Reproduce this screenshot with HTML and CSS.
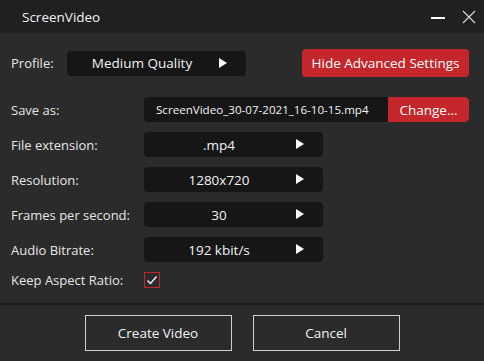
FILE: index.html
```html
<!DOCTYPE html>
<html lang="en">
<head>
    <meta charset="UTF-8">
    <title>ScreenVideo</title>
    <link rel="stylesheet" href="styles.css">
</head>
<body>

<div class="window">
    <!-- Title bar -->
    <div class="titlebar">
        <span class="title">ScreenVideo</span>
        <div class="winControls">
            <svg class="winBtn" width="14" height="14" viewBox="0 0 14 14"><rect x="0" y="7" width="14" height="2" fill="#ffffff"/></svg>
            <svg class="winBtn" width="14" height="14" viewBox="0 0 14 14"><path d="M1 1 L13 13 M13 1 L1 13" stroke="#d8d8d8" stroke-width="1.2" fill="none"/></svg>
        </div>
    </div>

    <div class="content">
        <!-- Profile row -->
        <div class="profileRow">
            <span class="label">Profile:</span>
            <div class="dropdown profileDrop">
                <span class="dropText">Medium Quality</span>
                <span class="arrow"></span>
            </div>
            <button class="redBtn advBtn">Hide Advanced Settings</button>
        </div>

        <!-- Advanced settings -->
        <div class="settings">
            <span class="label">Save as:</span>
            <div class="saveField">
                <span class="fileName">ScreenVideo_30-07-2021_16-10-15.mp4</span>
                <button class="redBtn changeBtn">Change...</button>
            </div>

            <span class="label">File extension:</span>
            <div class="dropdown"><span class="dropText">.mp4</span><span class="arrow"></span></div>

            <span class="label">Resolution:</span>
            <div class="dropdown"><span class="dropText">1280x720</span><span class="arrow"></span></div>

            <span class="label">Frames per second:</span>
            <div class="dropdown"><span class="dropText">30</span><span class="arrow"></span></div>

            <span class="label">Audio Bitrate:</span>
            <div class="dropdown"><span class="dropText">192 kbit/s</span><span class="arrow"></span></div>

            <span class="label">Keep Aspect Ratio:</span>
            <div class="checkbox">
                <svg width="14" height="14" viewBox="0 0 14 14"><path d="M2.5 7.5 L5.5 10.5 L11.5 3.5" stroke="#ffffff" stroke-width="1.3" fill="none"/></svg>
            </div>
        </div>
    </div>

    <!-- Footer buttons -->
    <div class="footer">
        <button class="outlineBtn">Create Video</button>
        <button class="outlineBtn">Cancel</button>
    </div>
</div>

</body>
</html>
```

FILE: styles.css
```css
/* Page */
body {
    margin: 0;
    background: #2b2b2b;
    font-family: "Open Sans", "Noto Sans", sans-serif;
    color: #ececec;
}

.window {
    width: 484px;
    height: 361px;
    display: flex;
    flex-direction: column;
    background: #2b2b2b;
}

/* Title bar */
.titlebar {
    height: 33px;
    background: #202020;
    display: flex;
    align-items: center;
    justify-content: space-between;
    padding: 0 8px 0 22px;
}

.title {
    font-size: 13.5px;
    color: #f2f2f2;
}

.winControls {
    display: flex;
    gap: 17px;
    align-items: center;
}

.winBtn {
    display: block;
}

/* Content */
.content {
    flex: 1;
    padding: 16px 15px 0 11px;
}

.label {
    font-size: 13px;
    color: #e6e6e6;
    display: flex;
    align-items: center;
}

.profileRow {
    display: flex;
    align-items: center;
    height: 28px;
}

.profileRow .label {
    width: 56px;
}

.dropdown {
    position: relative;
    width: 179px;
    height: 25px;
    background: #161616;
    border-radius: 4px;
    display: flex;
    align-items: center;
    box-sizing: border-box;
    padding-right: 29px;
}

.dropText {
    flex: 1;
    text-align: center;
    font-size: 13.5px;
    color: #f2f2f2;
}

/* Play-style arrow */
.arrow {
    position: absolute;
    right: 19px;
    top: 7px;
    width: 0;
    height: 0;
    border-top: 5px solid transparent;
    border-bottom: 5px solid transparent;
    border-left: 8px solid #ffffff;
}

.redBtn {
    background: #c4262b;
    color: #ffffff;
    border: none;
    font-family: inherit;
    font-size: 13.5px;
    cursor: pointer;
}

.advBtn {
    margin-left: auto;
    width: 167px;
    height: 28px;
    border-radius: 4px;
    padding: 0;
}

/* Settings grid */
.settings {
    display: grid;
    grid-template-columns: 133px auto;
    grid-template-rows: repeat(5, 25px) 16px;
    row-gap: 10px;
    margin-top: 20px;
    justify-items: start;
}

.saveField {
    display: flex;
    width: 325px;
    height: 25px;
    background: #161616;
    border-radius: 4px;
    overflow: hidden;
}

.fileName {
    flex: 1;
    padding-left: 12px;
    font-size: 11.6px;
    color: #f2f2f2;
    display: flex;
    align-items: center;
}

.changeBtn {
    width: 81px;
    height: 25px;
    border-radius: 0 4px 4px 0;
    padding: 0;
}

.checkbox {
    width: 16px;
    height: 16px;
    box-sizing: border-box;
    border: 1px solid #c4262b;
    display: flex;
    align-items: center;
    justify-content: center;
}

/* Footer */
.footer {
    border-top: 2px solid #1e1e1e;
    height: 56px;
    display: flex;
    justify-content: center;
    align-items: center;
    gap: 21px;
}

.outlineBtn {
    width: 147px;
    height: 36px;
    background: transparent;
    border: 1px solid #cfcfcf;
    color: #f2f2f2;
    font-family: inherit;
    font-size: 13.5px;
}
```
